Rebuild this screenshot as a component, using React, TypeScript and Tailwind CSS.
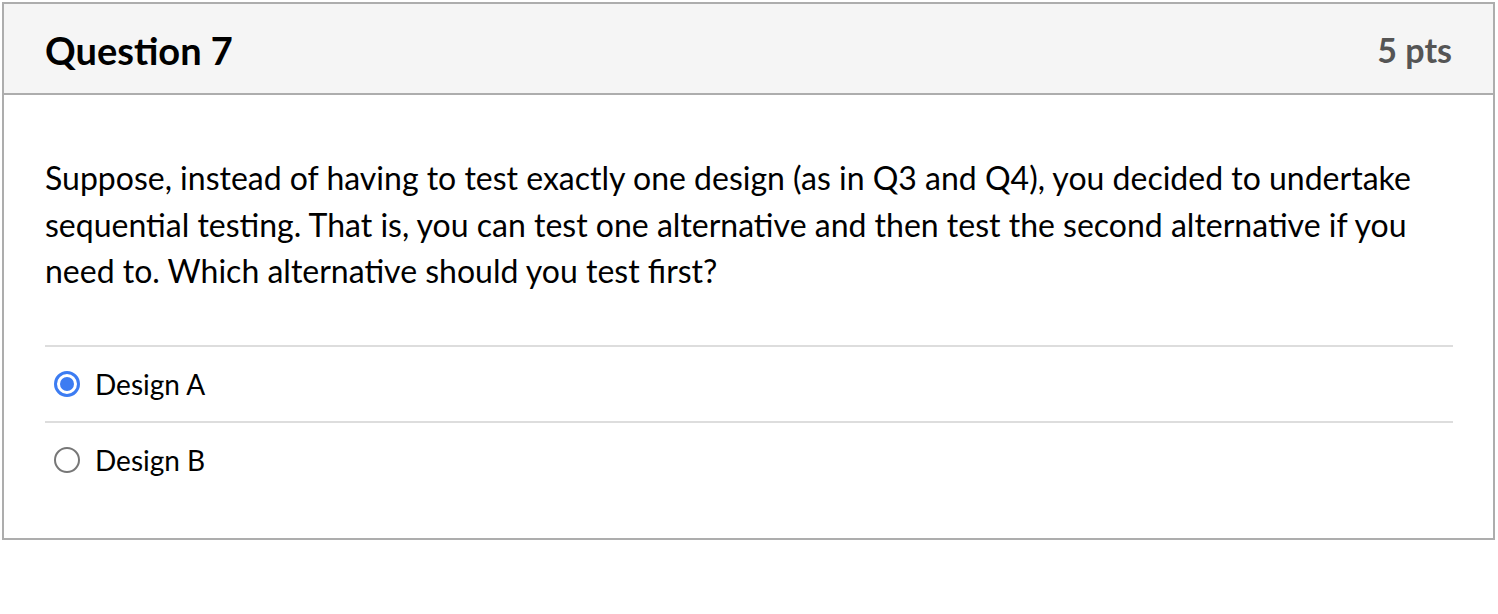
import { useState } from 'react';

const answers = ['Design A', 'Design B'];

const App = () => {
  const [selected, setSelected] = useState('Design A');

  return (
    <div className="w-[1498px] h-[614px] bg-white pt-[2px] pl-[2px]" style={{ fontFamily: 'Lato, "Noto Sans", sans-serif' }}>
      <div className="w-[1493px] h-[538px] border-2 border-[#adadad] bg-white">
        {/* header */}
        <div className="h-[91px] bg-[#f5f5f5] border-b-2 border-[#adadad] flex items-center justify-between pl-[41px] pr-[41px]">
          <h2 className="text-[38px] font-bold text-black leading-none pt-[2px]">Question 7</h2>
          <div className="text-[34px] font-bold text-[#555555] leading-none pt-[2px]">5 pts</div>
        </div>

        {/* body */}
        <div className="pl-[41px] pr-[40px] pt-[60px]">
          <p className="text-[32px] leading-[46.5px] text-black">
            Suppose, instead of having to test exactly one design (as in Q3 and Q4), you decided to undertake sequential testing. That is, you can test one alternative and then test the second alternative if you need to. Which alternative should you test first?
          </p>

          <div className="mt-[50px]">
            {answers.map((a) => (
              <label key={a} className="flex items-center h-[76px] border-t-2 border-[#dddddd] cursor-pointer">
                <input
                  type="radio"
                  name="q7"
                  className="sr-only"
                  checked={selected === a}
                  onChange={() => setSelected(a)}
                />
                {selected === a ? (
                  <span className="ml-[9px] w-[26px] h-[26px] rounded-full border-[3px] border-[#3c7cf2] flex items-center justify-center">
                    <span className="w-[14px] h-[14px] rounded-full bg-[#3c7cf2]" />
                  </span>
                ) : (
                  <span className="ml-[9px] w-[26px] h-[26px] rounded-full border-2 border-[#777777]" />
                )}
                <span className="ml-[15px] text-[28px] text-black leading-none">{a}</span>
              </label>
            ))}
          </div>
        </div>
      </div>
    </div>
  );
};

export default App;
